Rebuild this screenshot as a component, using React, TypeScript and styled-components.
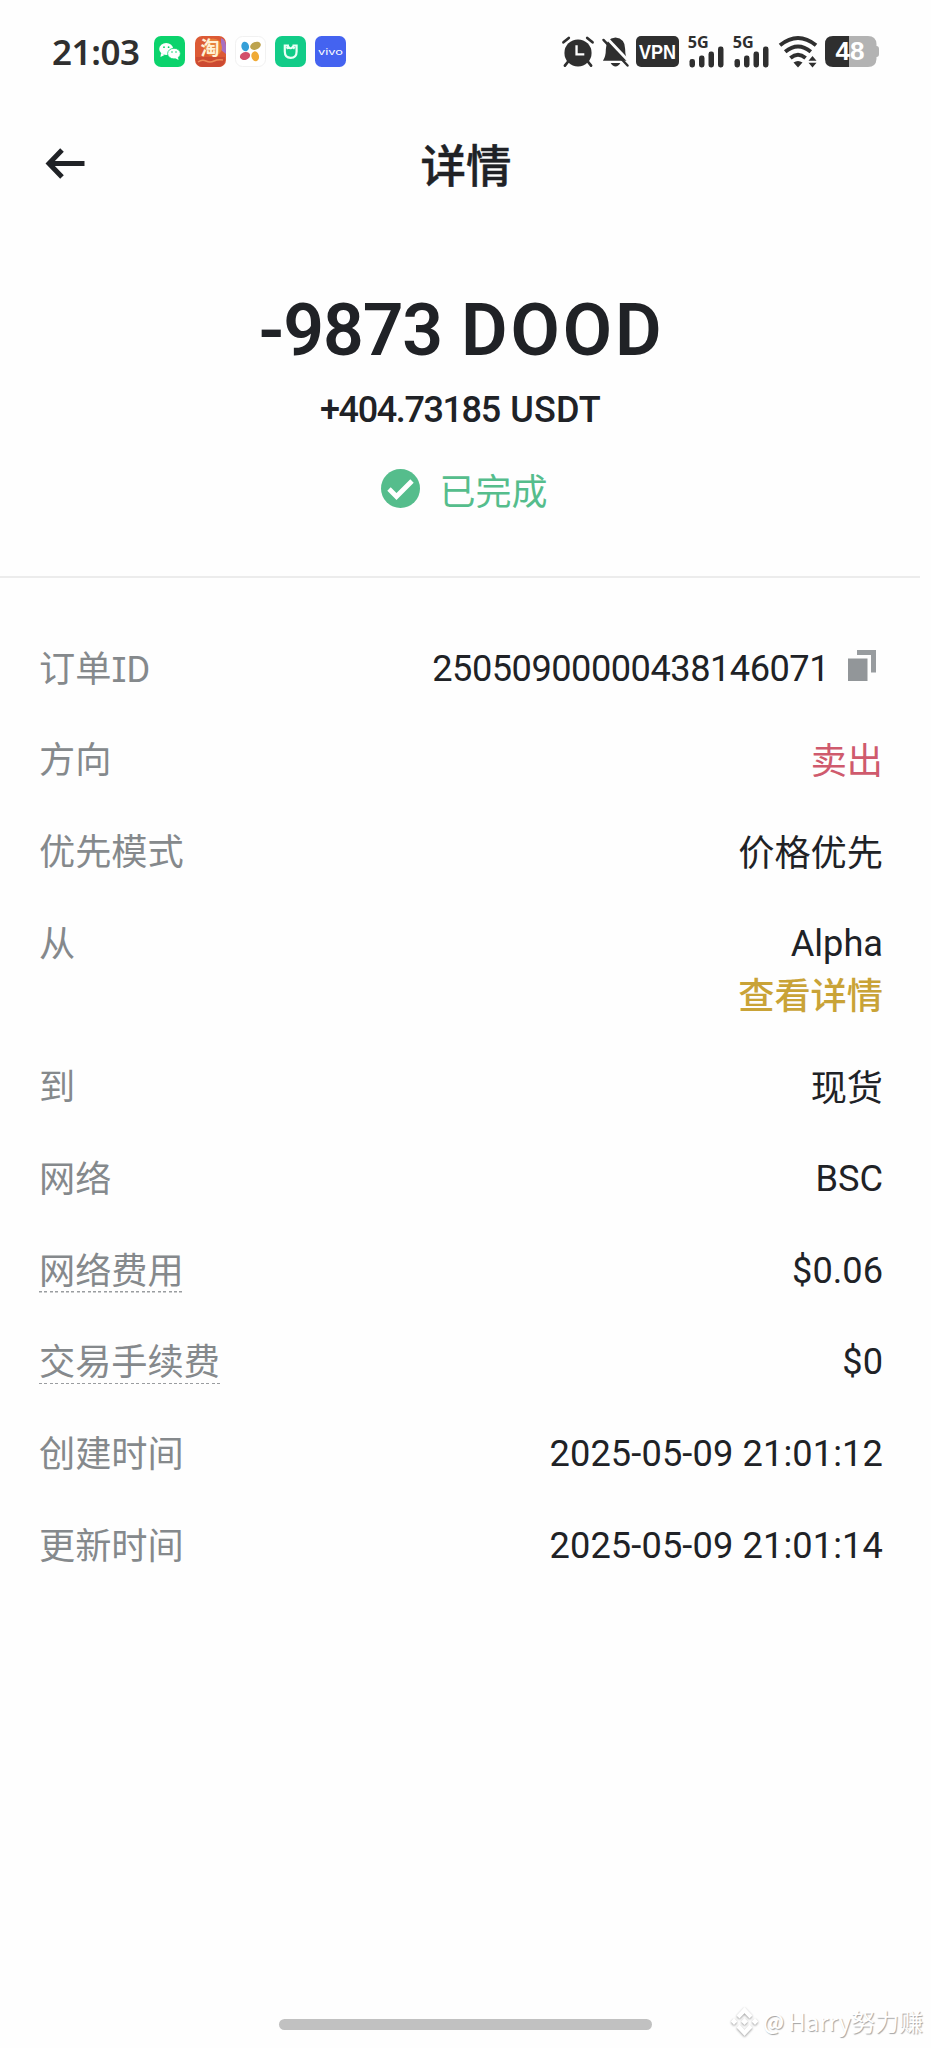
import React from 'react';
import styled, { createGlobalStyle } from 'styled-components';

const Global = createGlobalStyle`
  * { box-sizing: border-box; }
  html, body { margin: 0; background: #fefefe; }
  body { font-family: Roboto, "Noto Sans CJK SC", sans-serif; color: #202226; }
`;

const Screen = styled.div`
  width: 931px;
  height: 2048px;
  background: #fefefe;
  display: flex;
  flex-direction: column;
  overflow: hidden;
  position: relative;
`;

const StatusBar = styled.header`
  height: 103px;
  padding: 0 52px;
  display: flex;
  justify-content: space-between;
  align-items: center;
  flex: none;
`;

const Cluster = styled.div<{ $gap: number }>`
  display: flex;
  align-items: center;
  gap: ${(p) => p.$gap}px;
  svg { display: block; flex: none; overflow: visible; }
`;

const Indicator = styled.span<{ $before?: number }>`
  margin-left: ${(p) => p.$before ?? 0}px;
`;

const Clock = styled.span`
  width: 93px;
  font: 600 35px/40px "Noto Sans", sans-serif;
  letter-spacing: -0.4px;
  color: #2f2f2f;
  white-space: nowrap;
`;

const TitleBar = styled.nav`
  height: 124px;
  display: grid;
  grid-template-columns: 100px 1fr 100px;
  align-items: center;
  flex: none;
`;

const BackButton = styled.button`
  border: 0;
  background: none;
  padding: 0 0 0 45px;
  height: 36px;
  margin-top: -3px;
  svg { display: block; }
`;

const Title = styled.h1`
  margin: -4px 0 0;
  padding-left: 1px;
  text-align: center;
  font: 500 45.5px/60px "Noto Sans CJK SC", sans-serif;
  -webkit-text-stroke: 0.4px #202226;
  color: #202226;
`;

const Summary = styled.section`
  width: 920px;
  height: 351px;
  border-bottom: 2px solid #ececec;
  padding-top: 62px;
  display: flex;
  flex-direction: column;
  align-items: center;
  flex: none;
`;

const Amount = styled.div`
  display: flex;
  gap: 19px;
  padding-left: 3px;
  font-size: 71.5px;
  font-weight: 600;
  line-height: 84px;
  letter-spacing: -1.2px;
  white-space: nowrap;
`;

const Received = styled.div`
  display: flex;
  gap: 10.5px;
  margin-top: 15px;
  padding-left: 1px;
  font-size: 36px;
  font-weight: 500;
  line-height: 44px;
  letter-spacing: -1.4px;
`;

const Unit = styled.span<{ $spacing: number }>`
  letter-spacing: ${(p) => p.$spacing}px;
`;

const Status = styled.div`
  margin-top: 35px;
  padding-left: 9px;
  display: flex;
  align-items: center;
  gap: 19px;
  font-size: 36px;
  line-height: 52px;
  color: #55bd8c;
  svg { display: block; margin-bottom: 9px; }
`;

const Details = styled.dl`
  width: 920px;
  margin: 0;
  padding: 64.5px 37px 0 39px;
  display: flex;
  flex-direction: column;
  gap: 40.25px;
`;

const Row = styled.div`
  display: flex;
  justify-content: space-between;
  font-size: 36.2px;
  line-height: 51.5px;
`;

const Label = styled.dt<{ $hint?: boolean }>`
  color: #85898c;
  height: 51.5px;
  padding-top: 1px;
  ${(p) => p.$hint && `
    height: 48px;
    margin-bottom: 3.5px;
    background: repeating-linear-gradient(90deg, #9a9da0 0 3px, transparent 3px 5.4px) left bottom / 100% 1.5px no-repeat;
  `}
`;

const SerifI = styled.span`
  font-family: Inter, sans-serif;
  font-size: 34px;
  font-feature-settings: "cv08";
`;

const Value = styled.dd<{ $tone?: 'sell'; $han?: boolean; $spacing?: number }>`
  margin: 0;
  display: flex;
  flex-direction: column;
  align-items: flex-end;
  color: ${(p) => (p.$tone === 'sell' ? '#cf5a6d' : '#202226')};
  letter-spacing: ${(p) => p.$spacing ?? 0}px;
  ${(p) => p.$han && 'margin: 1.5px 0 -1.5px;'}
`;

const Link = styled.a`
  margin: 1.5px 0 -1.5px;
  color: #c9a337;
  font-weight: 500;
`;

const OrderId = styled.span`
  display: flex;
  align-items: center;
  gap: 19px;
  padding-right: 7px;
  svg { display: block; margin-bottom: 5px; }
`;

const HomeIndicator = styled.div`
  position: absolute;
  left: 279px;
  bottom: 18px;
  width: 373px;
  height: 11px;
  border-radius: 6px;
  background: #c1c1c1;
`;

const Watermark = styled.div`
  position: absolute;
  left: 730px;
  bottom: 10px;
  display: flex;
  align-items: center;
  font: 400 24px/34px "Noto Sans CJK SC", sans-serif;
  color: #fff;
  text-shadow: 1px 1px 1px #a4a4a4;
  white-space: nowrap;
  svg { filter: drop-shadow(0.5px 1px 1px #999); }
`;

const At = styled.span`
  margin: 0 4px 0 4px;
  font-size: 21px;
  font-weight: 700;
`;

const INK = '#2f2f2f';

const WeChat = () => (
  <svg width="31" height="31" viewBox="0 0 31 31">
    <rect width="31" height="31" rx="7" fill="#0bd36c" />
    <ellipse cx="12.2" cy="13" rx="7" ry="6" fill="#fff" />
    <path d="M7 17 6.5 21l4-2z" fill="#fff" />
    <ellipse cx="20" cy="17.6" rx="6.4" ry="5.3" fill="#fff" stroke="#0bd36c" strokeWidth=".8" />
    <path d="m21 22 3.5 2-.6-3z" fill="#fff" />
    <g fill="#0bd36c"><circle cx="10" cy="11.2" r=".9" /><circle cx="14.6" cy="11.2" r=".9" /><circle cx="18" cy="16" r=".8" /><circle cx="22" cy="16" r=".8" /></g>
  </svg>
);

const Taobao = () => (
  <svg width="31" height="31" viewBox="0 0 31 31">
    <rect width="31" height="31" rx="7" fill="#dc5a35" />
    <path d="M26 2q5 2 5 8v8l-5-4z" fill="#a86fc0" />
    <path d="M1 21h29v3q-1 7-7 7H8q-7 0-7-7z" fill="#cc4a32" />
    <circle cx="18" cy="11.5" r="9" fill="#e8823c" />
    <text x="15" y="19" fontSize="19" fontWeight="700" fontFamily="Noto Sans CJK SC" fill="#fff1d6" textAnchor="middle">淘</text>
    <path d="M3 26q4-3 8-1t8 0 9-1" fill="none" stroke="#ee8a58" strokeWidth="1.5" />
  </svg>
);

const Petals = () => (
  <svg width="31" height="31" viewBox="0 0 31 31">
    <rect x=".5" y=".5" width="30" height="30" rx="7" fill="#fff" stroke="#f1f1f1" />
    <ellipse cx="10.2" cy="10.5" rx="3.8" ry="4.8" fill="#359fd8" transform="rotate(-15 10.2 10.5)" />
    <ellipse cx="20.5" cy="9.8" rx="5.5" ry="3.8" fill="#bda34e" transform="rotate(-22 20.5 9.8)" />
    <ellipse cx="10" cy="20" rx="5.2" ry="3.9" fill="#d2506b" transform="rotate(-18 10 20)" />
    <ellipse cx="20.2" cy="20.3" rx="3.8" ry="5" fill="#f0aa35" transform="rotate(-12 20.2 20.3)" />
  </svg>
);

const MiHome = () => (
  <svg width="31" height="31" viewBox="0 0 31 31">
    <rect width="31" height="31" rx="7" fill="#12cc88" />
    <path d="M14 9.5H9.8v6q0 6.3 5.9 6.3t5.9-6.3v-6H17.5M11.5 12.5l2-1.500q2 2.500 4.200 0l2 1.500" fill="none" stroke="#e9fff5" strokeWidth="2.2" />
  </svg>
);

const Vivo = () => (
  <svg width="31" height="31" viewBox="0 0 31 31">
    <rect width="31" height="31" rx="6.5" fill="#4463f0" />
    <text x="15.5" y="18.6" textAnchor="middle" textLength="25" lengthAdjust="spacingAndGlyphs" fontSize="9" fontFamily="Inter" fontWeight="400" fill="#fff">vivo</text>
  </svg>
);

const Alarm = () => (
  <svg width="32" height="32" viewBox="0 0 33 32">
    <path d="m7 25-4 5M26 25l4 5M1.5 6 7 1.5M26 1.5 31.5 6" stroke={INK} strokeWidth="2.8" strokeLinecap="round" />
    <circle cx="16.5" cy="17" r="14" fill={INK} />
    <path d="M15 9v9.5h8" fill="none" stroke="#fff" strokeWidth="2.4" />
  </svg>
);

const Muted = () => (
  <svg width="27" height="32" viewBox="0 0 28 32">
    <path d="M14 1q10 1 10 12 0 8 3 12H1q3-4 3-12Q4 2 14 1z" fill={INK} />
    <path d="M9 27.5h10q-2 3.5-5 3.5t-5-3.5z" fill={INK} />
    <path d="M4 .5 30 28" stroke="#fefefe" strokeWidth="3" />
    <path d="m1.5 3.5 25 26.5" stroke={INK} strokeWidth="2.5" strokeLinecap="round" />
  </svg>
);

const Vpn = () => (
  <svg width="43" height="31" viewBox="0 0 43 31">
    <rect width="43" height="31" rx="5" fill={INK} />
    <text x="21.5" y="22.6" textAnchor="middle" textLength="37" lengthAdjust="spacingAndGlyphs" fontSize="19.5" fontWeight="700" fontFamily="Liberation Sans" fill="#fff">VPN</text>
  </svg>
);

const Signal = () => (
  <svg width="36" height="32" viewBox="0 0 36 32">
    <text x="-.3" y="12" textLength="21" lengthAdjust="spacingAndGlyphs" fontSize="16" fontWeight="700" fontFamily="Noto Sans" fill={INK}>5G</text>
    <g fill={INK}>
      <rect x="1.5" y="23" width="5.5" height="8.5" rx="2.4" />
      <rect x="11" y="19.5" width="5.5" height="12" rx="2.4" />
      <rect x="20.5" y="15.5" width="5.5" height="16" rx="2.4" />
      <rect x="30" y="10.5" width="5.5" height="21" rx="2.4" />
    </g>
  </svg>
);

const Wifi = () => (
  <svg width="38" height="32" viewBox="0 0 38 32">
    <g fill="none" stroke={INK} strokeWidth="3.9">
      <path d="M1 9.3q18-14.5 36 0" />
      <path d="M6.2 15.7q12.8-10.5 25.6 0" />
      <path d="M11.4 22q7.6-6.4 15.2 0" />
    </g>
    <path d="M14.5 26.5q4.5-3 9 0L19 31.5z" fill={INK} />
    <path d="m33.5 20 4 4.8h-8zM33.5 31.5l4-4.8h-8z" fill={INK} />
  </svg>
);

const Battery = () => (
  <svg width="54" height="31" viewBox="0 0 54 31">
    <path d="M8 0h16v31H8q-8 0-8-8V8q0-8 8-8z" fill={INK} />
    <path d="M24 0h19q8 0 8.5 8v2q2.5 0 2.5 3v5q0 3-2.5 3v2q-.5 8-8.500 8H24z" fill="#b3b3b3" />
    <text x="25" y="24" textAnchor="middle" textLength="29" lengthAdjust="spacingAndGlyphs" fontSize="25" fontWeight="700" fontFamily="Liberation Sans" fill="#fff">48</text>
  </svg>
);

const BackArrow = () => (
  <svg width="40" height="32" viewBox="0 0 40 32">
    <path d="M17 2 4 15.5 17 29M5 15.5h34.5" fill="none" stroke="#202226" strokeWidth="5" />
  </svg>
);

const CheckBadge = () => (
  <svg width="39" height="39" viewBox="0 0 39 39">
    <circle cx="19.5" cy="19.5" r="19.5" fill="#55bd8c" />
    <path d="m8 20 7.5 7.5L31 12" fill="none" stroke="#fff" strokeWidth="4.8" />
  </svg>
);

const CopyIcon = () => (
  <svg width="28" height="31" viewBox="0 0 28 31">
    <path d="M9 0h19v22.5h-5V5H9z" fill="#989c9f" />
    <path d="M0 8.5h19.5V31H0z" fill="#929699" />
  </svg>
);

const DiamondLogo = () => (
  <svg width="29" height="31" viewBox="0 0 29 31">
    <g fill="#fff">
      <path d="m14.5 1 8 8.5-3 3-5-5.2-5 5.2-3-3zM14.5 30l8-8.5-3-3-5 5.2-5-5.2-3 3z" />
      <path d="m14.5 12 3.5 3.5-3.5 3.5-3.5-3.5zM4 12l3.3 3.5L4 19 .8 15.5zM25 12l3.3 3.5L25 19l-3.3-3.5z" />
    </g>
  </svg>
);

export default function App() {
  return (
    <Screen>
      <Global />
      <StatusBar>
        <Cluster $gap={9.3}>
          <Clock>21:03</Clock>
          <WeChat />
          <Taobao />
          <Petals />
          <MiHome />
          <Vivo />
        </Cluster>
        <Cluster $gap={0}>
          <Indicator><Alarm /></Indicator>
          <Indicator $before={8}><Muted /></Indicator>
          <Indicator $before={7}><Vpn /></Indicator>
          <Indicator $before={9}><Signal /></Indicator>
          <Indicator $before={9}><Signal /></Indicator>
          <Indicator $before={10}><Wifi /></Indicator>
          <Indicator $before={8}><Battery /></Indicator>
        </Cluster>
      </StatusBar>
      <TitleBar>
        <BackButton aria-label="返回"><BackArrow /></BackButton>
        <Title>详情</Title>
      </TitleBar>
      <Summary>
        <Amount>-9873 <Unit $spacing={3}>DOOD</Unit></Amount>
        <Received>+404.73185 <Unit $spacing={0.2}>USDT</Unit></Received>
        <Status><CheckBadge />已完成</Status>
      </Summary>
      <Details>
        <Row>
          <Label>订单<SerifI>I</SerifI>D</Label>
          <Value $spacing={-0.5}>
            <OrderId>25050900000438146071<CopyIcon /></OrderId>
          </Value>
        </Row>
        <Row><Label>方向</Label><Value $han $tone="sell">卖出</Value></Row>
        <Row><Label>优先模式</Label><Value $han>价格优先</Value></Row>
        <Row><Label>从</Label><Value><span>Alpha</span><Link>查看详情</Link></Value></Row>
        <Row><Label>到</Label><Value $han>现货</Value></Row>
        <Row><Label>网络</Label><Value>BSC</Value></Row>
        <Row><Label $hint>网络费用</Label><Value>$0.06</Value></Row>
        <Row><Label $hint>交易手续费</Label><Value>$0</Value></Row>
        <Row><Label>创建时间</Label><Value $spacing={0.12}>2025-05-09 21:01:12</Value></Row>
        <Row><Label>更新时间</Label><Value $spacing={0.12}>2025-05-09 21:01:14</Value></Row>
      </Details>
      <HomeIndicator />
      <Watermark><DiamondLogo /><At>@</At><span>Harry努力赚</span></Watermark>
    </Screen>
  );
}
